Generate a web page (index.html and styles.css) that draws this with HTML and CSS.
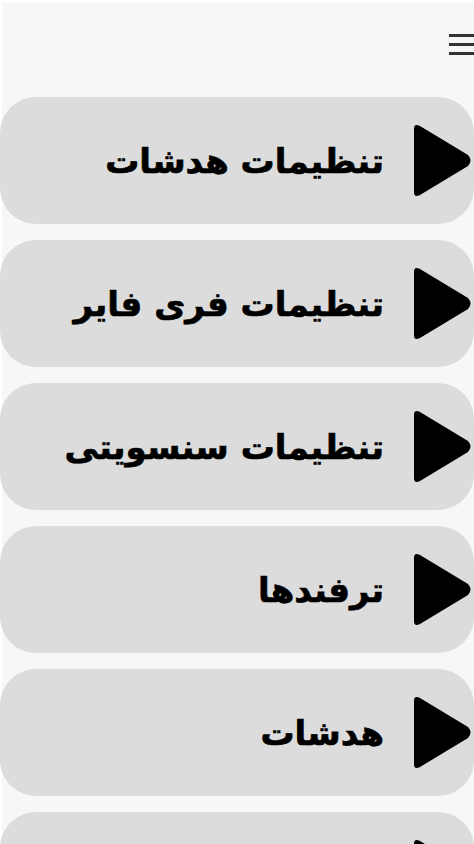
FILE: index.html
```html
<!DOCTYPE html>
<html lang="fa">
<head>
<meta charset="utf-8">
<title>تنظیمات</title>
<link rel="stylesheet" href="styles.css">
</head>
<body>
<div class="screen">
  <header class="topbar">
    <button class="menu" aria-label="menu">
      <span></span><span></span><span></span>
    </button>
  </header>
  <main class="list">
    <div class="item">
      <svg class="play" viewBox="0 0 62 75"><path d="M4 6 Q4 0 10 3 L58 32 Q63 37.5 58 43 L10 72 Q4 75 4 69 Z"/></svg>
      <span class="label">تنظیمات هدشات</span>
    </div>
    <div class="item">
      <svg class="play" viewBox="0 0 62 75"><path d="M4 6 Q4 0 10 3 L58 32 Q63 37.5 58 43 L10 72 Q4 75 4 69 Z"/></svg>
      <span class="label">تنظیمات فری فایر</span>
    </div>
    <div class="item">
      <svg class="play" viewBox="0 0 62 75"><path d="M4 6 Q4 0 10 3 L58 32 Q63 37.5 58 43 L10 72 Q4 75 4 69 Z"/></svg>
      <span class="label">تنظیمات سنسویتی</span>
    </div>
    <div class="item">
      <svg class="play" viewBox="0 0 62 75"><path d="M4 6 Q4 0 10 3 L58 32 Q63 37.5 58 43 L10 72 Q4 75 4 69 Z"/></svg>
      <span class="label">ترفندها</span>
    </div>
    <div class="item">
      <svg class="play" viewBox="0 0 62 75"><path d="M4 6 Q4 0 10 3 L58 32 Q63 37.5 58 43 L10 72 Q4 75 4 69 Z"/></svg>
      <span class="label">هدشات</span>
    </div>
    <div class="item">
      <svg class="play" viewBox="0 0 62 75"><path d="M4 6 Q4 0 10 3 L58 32 Q63 37.5 58 43 L10 72 Q4 75 4 69 Z"/></svg>
    </div>
  </main>
</div>
</body>
</html>
```

FILE: styles.css
```css
html, body {
  margin: 0;
  padding: 0;
  background: #f7f7f7;
  height: 100%;
  overflow: hidden;
}
body {
  font-family: "DejaVu Sans", "Noto Sans", sans-serif;
}
.screen {
  display: flex;
  flex-direction: column;
  border-top: 2px solid #ffffff;
  border-left: 2px solid #ffffff;
}
.topbar {
  height: 95px;
  display: flex;
  justify-content: flex-end;
  align-items: flex-start;
}
.menu {
  margin-top: 32px;
  width: 25px;
  padding: 0;
  border: 0;
  background: transparent;
  display: flex;
  flex-direction: column;
  gap: 6px;
}
.menu span {
  display: block;
  height: 3px;
  background: #333333;
}
.list {
  display: flex;
  flex-direction: column;
  gap: 16px;
  margin-left: -2px;
}
.item {
  height: 127px;
  border-radius: 36px;
  background: #dcdcdc;
  display: flex;
  flex-direction: row-reverse;
  align-items: center;
  gap: 26px;
  padding-right: 2px;
  flex-shrink: 0;
}
.play {
  width: 62px;
  height: 75px;
  fill: #000000;
  flex-shrink: 0;
}
.label {
  direction: rtl;
  font-size: 34px;
  font-weight: bold;
  color: #000000;
  line-height: 1;
  -webkit-text-stroke: 0.7px #000000;
}
```
